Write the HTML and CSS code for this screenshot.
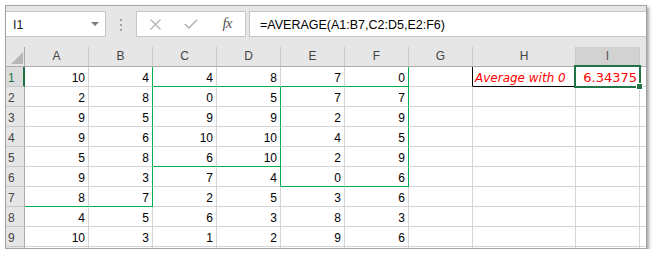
FILE: index.html
```html
<!DOCTYPE html>
<html lang="en">
  <head>
    <meta charset="UTF-8" />
    <title>AVERAGE</title>
    <link rel="stylesheet" href="styles.css">
  </head>
  <body>
    <div class="window">
      <div class="formula-bar">
        <div class="name-box"><span class="name">I1</span><span class="caret"></span></div>
        <div class="grip"><i></i><i></i><i></i></div>
        <div class="fx-box">
          <span class="slot">
            <svg width="11" height="11" viewBox="0 0 11 11"><path d="M0.5 0.5L10.5 10.5M10.5 0.5L0.5 10.5" stroke="#b0b0b0" stroke-width="1.2" fill="none"/></svg>
          </span>
          <span class="slot">
            <svg width="14" height="10" viewBox="0 0 14 10"><path d="M0.8 5L4.8 9L13.2 0.8" stroke="#b0b0b0" stroke-width="1.4" fill="none"/></svg>
          </span>
          <span class="slot fx">fx</span>
        </div>
        <div class="formula">=AVERAGE(A1:B7,C2:D5,E2:F6)</div>
      </div>

      <div class="sheet">
        <div class="ch corner"><span class="tri"></span></div><div class="ch">A</div><div class="ch">B</div><div class="ch">C</div><div class="ch">D</div><div class="ch">E</div><div class="ch">F</div><div class="ch">G</div><div class="ch">H</div><div class="ch on">I</div><div class="ch end"></div>

        <div class="rh on">1</div><div class="n">10</div><div class="n gr">4</div><div class="n gb">4</div><div class="n gb">8</div><div class="n gb">7</div><div class="n gb gr">0</div><div class="kr"></div><div class="label kb">Average with 0</div><div class="n value sel">6.34375</div><div class="end"></div>
        <div class="rh">2</div><div class="n">2</div><div class="n gr">8</div><div class="n">0</div><div class="n gr">5</div><div class="n">7</div><div class="n gr">7</div><div></div><div></div><div></div><div class="end"></div>
        <div class="rh">3</div><div class="n">9</div><div class="n gr">5</div><div class="n">9</div><div class="n gr">9</div><div class="n">2</div><div class="n gr">9</div><div></div><div></div><div></div><div class="end"></div>
        <div class="rh">4</div><div class="n">9</div><div class="n gr">6</div><div class="n">10</div><div class="n gr">10</div><div class="n">4</div><div class="n gr">5</div><div></div><div></div><div></div><div class="end"></div>
        <div class="rh">5</div><div class="n">5</div><div class="n gr">8</div><div class="n gb">6</div><div class="n gr gb">10</div><div class="n">2</div><div class="n gr">9</div><div></div><div></div><div></div><div class="end"></div>
        <div class="rh">6</div><div class="n">9</div><div class="n gr">3</div><div class="n">7</div><div class="n gr">4</div><div class="n gb">0</div><div class="n gr gb">6</div><div></div><div></div><div></div><div class="end"></div>
        <div class="rh">7</div><div class="n gb">8</div><div class="n gr gb">7</div><div class="n">2</div><div class="n">5</div><div class="n">3</div><div class="n">6</div><div></div><div></div><div></div><div class="end"></div>
        <div class="rh">8</div><div class="n">4</div><div class="n">5</div><div class="n">6</div><div class="n">3</div><div class="n">8</div><div class="n">3</div><div></div><div></div><div></div><div class="end"></div>
        <div class="rh">9</div><div class="n">10</div><div class="n">3</div><div class="n">1</div><div class="n">2</div><div class="n">9</div><div class="n">6</div><div></div><div></div><div></div><div class="end"></div>
        <div class="rh"></div><div></div><div></div><div></div><div></div><div></div><div></div><div></div><div></div><div></div><div class="end"></div>
      </div>
    </div>
  </body>
</html>
```

FILE: styles.css
```css
html,
body {
  margin: 0;
  padding: 0;
  background: #fff;
}

body {
  font-family: "Liberation Sans", Arial, sans-serif;
  color: #000;
}

.window {
  margin: 5px 0 0 5px;
  width: 642px;
  height: 244px;
  box-sizing: border-box;
  border: 1px solid #a3a3a3;
  box-shadow: 2px 2px 3px rgba(0, 0, 0, 0.35);
  background: #e6e6e6;
  overflow: hidden;
}

/* formula bar */

.formula-bar {
  height: 41px;
  box-sizing: border-box;
  padding-top: 5px;
  display: flex;
  align-items: flex-start;
}

.name-box {
  width: 100px;
  height: 26px;
  box-sizing: border-box;
  background: #fff;
  border: 1px solid #c6c6c6;
  border-left: 0;
  display: flex;
  justify-content: space-between;
  padding: 0 6px 0 7px;
  font-size: 12.5px;
  color: #222;
}

.name-box .name {
  padding-top: 4px;
  line-height: 18px;
}

.name-box .caret {
  margin-top: 10px;
  width: 0;
  height: 0;
  border-left: 4px solid transparent;
  border-right: 4px solid transparent;
  border-top: 4px solid #7a7a7a;
}

.grip {
  width: 30px;
  display: flex;
  flex-direction: column;
  align-items: center;
  gap: 3px;
  padding-top: 8px;
}

.grip i {
  display: block;
  width: 2px;
  height: 2px;
  background: #a0a0a0;
}

.fx-box {
  width: 110px;
  height: 26px;
  box-sizing: border-box;
  background: #fff;
  border: 1px solid #c6c6c6;
  display: flex;
}

.fx-box .slot {
  width: 36px;
  display: flex;
  align-items: center;
  justify-content: center;
}

.fx-box .fx {
  font-family: "Liberation Serif", "Times New Roman", serif;
  font-style: italic;
  font-size: 15px;
  color: #555;
  letter-spacing: -1px;
  padding-bottom: 1px;
}

.formula {
  flex: 1;
  margin-left: 3px;
  height: 26px;
  box-sizing: border-box;
  background: #fff;
  border: 1px solid #c6c6c6;
  border-right: 0;
  padding: 2px 0 0 10px;
  line-height: 22px;
  font-size: 12.5px;
}

/* sheet */

.sheet {
  display: grid;
  grid-template-columns: 19px repeat(7, 64px) 103px 64px 1fr;
  grid-auto-rows: 20px;
  background: #fff;
  font-size: 12px;
}

.sheet > div {
  box-sizing: border-box;
  border-right: 1px solid #d4d4d4;
  border-bottom: 1px solid #d4d4d4;
  padding: 3px 3px 0;
  line-height: 17px;
  white-space: nowrap;
}

.sheet > .end {
  border-right: 0;
}

.sheet > .n {
  text-align: right;
}

.sheet > .ch {
  background: #e6e6e6;
  border-right-color: #c8c8c8;
  border-bottom-color: #ababab;
  text-align: center;
  padding-top: 1px;
  color: #444;
}

.sheet > .ch.on {
  background: #d2d2d2;
  color: #555;
}

.sheet > .corner {
  display: flex;
  justify-content: flex-end;
  align-items: flex-end;
  padding: 0 1px 2px 0;
  border-right-color: #ababab;
}

.corner .tri {
  width: 0;
  height: 0;
  border-left: 12px solid transparent;
  border-bottom: 12px solid #b7b7b7;
}

.sheet > .rh {
  background: #e6e6e6;
  border-right-color: #ababab;
  border-bottom-color: #c8c8c8;
  padding-left: 2px;
  color: #444;
}

.sheet > .rh.on {
  background: #dcdcdc;
  border-right: 2px solid #217346;
  color: #217346;
}

.sheet > .gr {
  border-right-color: #00b050;
}

.sheet > .gb {
  border-bottom-color: #00b050;
}

.sheet > .kr {
  border-right-color: #000;
}

.sheet > .kb {
  border-bottom-color: #000;
}

.sheet > .label {
  font-family: "DejaVu Sans", Verdana, sans-serif;
  font-style: italic;
  color: #ff0000;
  padding-left: 2px;
}

.sheet > .value {
  font-family: "DejaVu Sans", Verdana, sans-serif;
  font-size: 13px;
  color: #ff0000;
  padding: 2px 2px 0 0;
}

.sel {
  position: relative;
}

.sel::before {
  content: "";
  position: absolute;
  top: -2px;
  left: -2px;
  right: -2px;
  bottom: -2px;
  border: 2px solid #217346;
}

.sel::after {
  content: "";
  position: absolute;
  right: -4px;
  bottom: -4px;
  width: 5px;
  height: 5px;
  background: #217346;
  border: 1px solid #fff;
}
```
